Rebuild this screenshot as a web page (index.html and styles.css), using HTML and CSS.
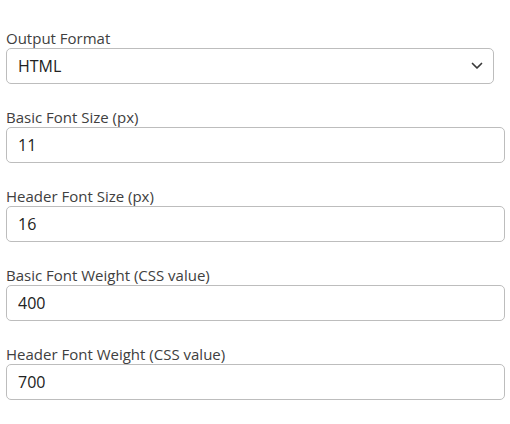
FILE: index.html
```html
<!DOCTYPE html>
<html lang="en">
<head>
    <meta charset="UTF-8">
    <title>Export Settings</title>
    <link rel="stylesheet" href="styles.css">
</head>
<body>
    <div class="settings">
        <div class="field">
            <label class="label" for="format">Output Format</label>
            <div class="select-wrap">
                <select id="format" class="control select">
                    <option>HTML</option>
                    <option>Markdown</option>
                    <option>PDF</option>
                </select>
                <!-- chevron drawn over the native arrow -->
                <svg class="chevron" width="12" height="8" viewBox="0 0 12 8">
                    <path d="M1.5 1.5 L6 6 L10.5 1.5" fill="none" stroke="#3a3a3a" stroke-width="1.7" stroke-linecap="round" stroke-linejoin="round"/>
                </svg>
            </div>
        </div>

        <div class="field">
            <label class="label" for="baseSize">Basic Font Size (px)</label>
            <input id="baseSize" class="control" type="text" value="11">
        </div>

        <div class="field">
            <label class="label" for="headSize">Header Font Size (px)</label>
            <input id="headSize" class="control" type="text" value="16">
        </div>

        <div class="field">
            <label class="label" for="baseWeight">Basic Font Weight (CSS value)</label>
            <input id="baseWeight" class="control" type="text" value="400">
        </div>

        <div class="field">
            <label class="label" for="headWeight">Header Font Weight (CSS value)</label>
            <input id="headWeight" class="control" type="text" value="700">
        </div>
    </div>
</body>
</html>
```

FILE: styles.css
```css
* {
    box-sizing: border-box;
    margin: 0;
    padding: 0;
}

body {
    background: #ffffff;
    font-family: 'Open Sans', 'Noto Sans', sans-serif;
    color: #333;
    padding: 28px 5px 0 6px;
}

.field {
    margin-bottom: 23px;
}

.label {
    display: block;
    font-size: 15px;
    line-height: 20px;
    color: #404040;
}

.control {
    display: block;
    width: 100%;
    height: 36px;
    padding: 0 11px;
    font-family: inherit;
    font-size: 16px;
    color: #222;
    background: #fff;
    border: 1px solid #bdbdbd;
    border-radius: 5px;
    outline: none;
}

.select-wrap {
    position: relative;
    width: 488px;
}

.select {
    appearance: none;
    -webkit-appearance: none;
}

.chevron {
    position: absolute;
    right: 11px;
    top: 14px;
    pointer-events: none;
}
```
